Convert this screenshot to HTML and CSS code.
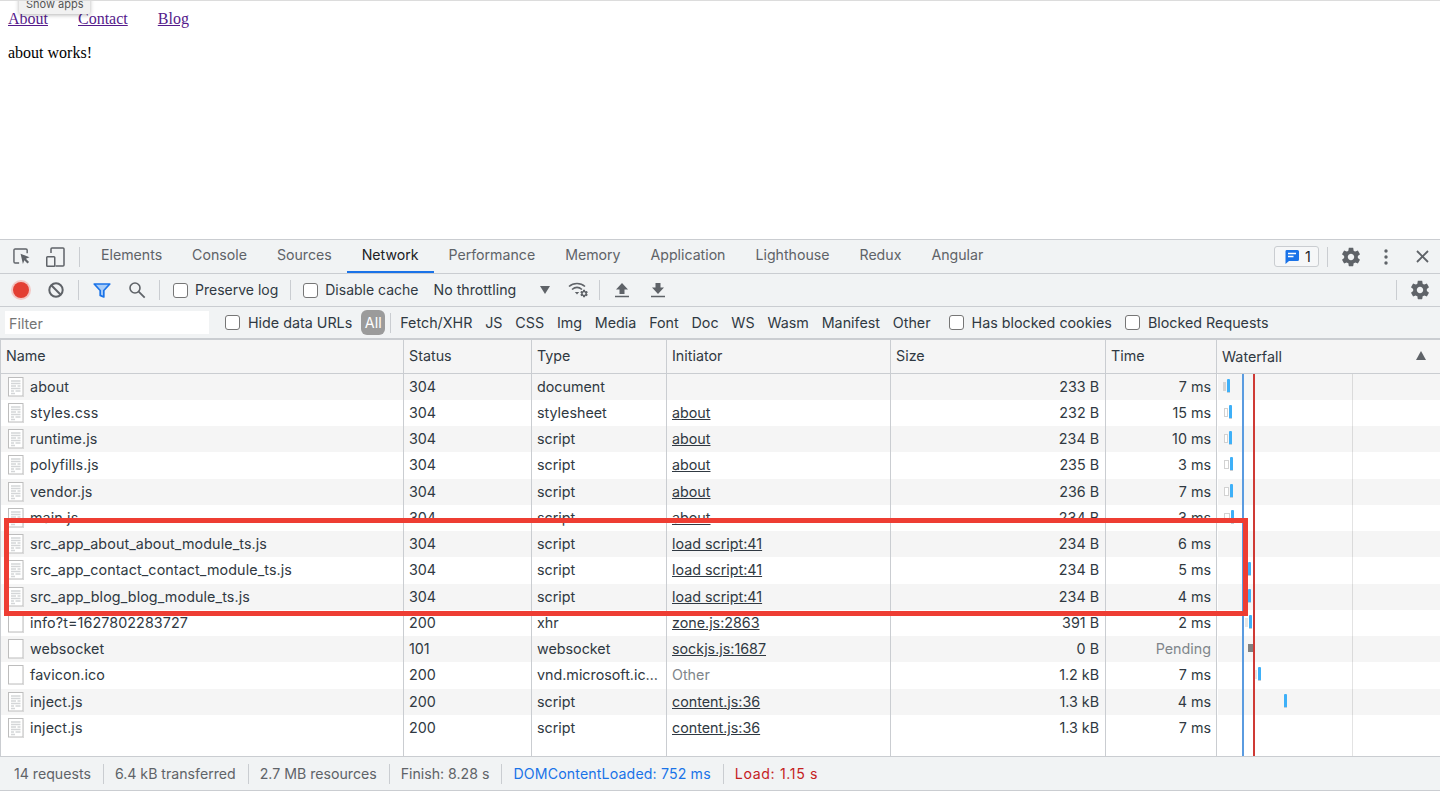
FILE: index.html
```html
<!DOCTYPE html>
<html lang="en">
<head>
<meta charset="utf-8">
<title>about works</title>
<link rel="stylesheet" href="styles.css">
</head>
<body>
<svg class="defs" width="0" height="0" aria-hidden="true">
  <symbol id="gear" viewBox="0 0 24 24"><path d="M19.43 12.98c.04-.32.07-.64.07-.98s-.03-.66-.07-.98l2.11-1.65c.19-.15.24-.42.12-.64l-2-3.46c-.12-.22-.39-.3-.61-.22l-2.49 1c-.52-.4-1.08-.73-1.69-.98l-.38-2.65C14.46 2.18 14.25 2 14 2h-4c-.25 0-.46.18-.49.42l-.38 2.65c-.61.25-1.17.59-1.69.98l-2.49-1c-.23-.09-.49 0-.61.22l-2 3.46c-.13.22-.07.49.12.64l2.11 1.65c-.04.32-.07.65-.07.98s.03.66.07.98l-2.11 1.65c-.19.15-.24.42-.12.64l2 3.46c.12.22.39.3.61.22l2.49-1c.52.4 1.08.73 1.69.98l.38 2.65c.03.24.24.42.49.42h4c.25 0 .46-.18.49-.42l.38-2.65c.61-.25 1.17-.59 1.69-.98l2.49 1c.23.09.49 0 .61-.22l2-3.46c.12-.22.07-.49-.12-.64l-2.11-1.65zM12 15.5c-1.93 0-3.5-1.57-3.5-3.5s1.57-3.5 3.5-3.5 3.5 1.57 3.5 3.5-1.57 3.5-3.5 3.5z"/></symbol>
  <symbol id="doc" viewBox="0 0 16 20"><rect x=".5" y=".5" width="14.5" height="18.5" fill="#fff" stroke="#bdbdbd"/><path d="M15.5 2v18H2" fill="none" stroke="#d8d8d8"/><path d="M3 4h9.5M3 6.5h9.5M3 9h5M9.500 9h3M3 11.500h9.500M3 14h3M7.500 14h5M3 16.500h4" stroke="#d4d6d8" stroke-width="1.300"/></symbol>
  <symbol id="blank" viewBox="0 0 16 20"><rect x=".5" y=".5" width="14.5" height="18.5" fill="#fff" stroke="#bdbdbd"/><path d="M15.500 2v18H2" fill="none" stroke="#d8d8d8"/></symbol>
</svg>

<main class="page">
  <div class="tooltip">Show apps</div>
  <nav class="nav"><a href="#about">About</a><a href="#contact">Contact</a><a href="#blog">Blog</a></nav>
  <p class="works">about works!</p>
</main>

<section class="devtools">
  <header class="bar tabbar">
    <svg class="ic-inspect" width="17" height="17" viewBox="0 0 18 18"><path d="M6.500 15.800H2.300a1.300 1.300 0 0 1-1.300-1.300V2.300A1.300 1.300 0 0 1 2.300 1h11.400A1.300 1.300 0 0 1 15 2.300v3.200" fill="none" stroke="#5f6368" stroke-width="1.500"/><path d="M8 6l9.500 3.900-3.800 1.500 3.300 3.300-1.700 1.700-3.300-3.300-1.500 3.800z" fill="#5f6368"/></svg>
    <svg class="ic-device" width="20" height="20" viewBox="0 0 20 20"><path d="M6 6V2a1 1 0 0 1 1-1h11a1 1 0 0 1 1 1v16a1 1 0 0 1-1 1h-7.500" fill="none" stroke="#5f6368" stroke-width="1.500"/><rect x="1.750" y="9.750" width="8" height="9.500" rx=".8" fill="none" stroke="#5f6368" stroke-width="1.500"/></svg>
    <span class="sep sep-tabs"></span>
    <span class="tab">Elements</span><span class="tab">Console</span><span class="tab">Sources</span><span class="tab active">Network</span><span class="tab">Performance</span><span class="tab">Memory</span><span class="tab">Application</span><span class="tab">Lighthouse</span><span class="tab">Redux</span><span class="tab">Angular</span>
    <span class="spacer"></span>
    <span class="issues"><svg width="14" height="14" viewBox="0 0 14 14"><path d="M1.500 0h11A1.500 1.500 0 0 1 14 1.500v8a1.500 1.500 0 0 1-1.500 1.500H4l-3.500 3V1.500A1.500 1.500 0 0 1 1.500 0z" fill="#1a73e8"/><path d="M3 3.500h8M3 6.500h5.500" stroke="#fff" stroke-width="1.300"/></svg>1</span>
    <span class="sep sep-issues"></span>
    <svg class="ic-gear-top" width="22" height="22"><use href="#gear"/></svg>
    <svg class="ic-kebab" width="4" height="16" viewBox="0 0 4 16"><circle cx="2" cy="2" r="1.700"/><circle cx="2" cy="8" r="1.700"/><circle cx="2" cy="14" r="1.700"/></svg>
    <svg class="ic-close" width="13" height="13" viewBox="0 0 13 13"><path d="M1 1l11 11M12 1L1 12" stroke="#5f6368" stroke-width="1.800"/></svg>
  </header>

  <div class="bar toolbar">
    <span class="record"></span>
    <svg class="ic-clear" width="16" height="16" viewBox="0 0 16 16"><circle cx="8" cy="8" r="6.700" fill="none" stroke="#5f6368" stroke-width="2"/><path d="M3.300 3.300l9.400 9.400" stroke="#5f6368" stroke-width="2"/></svg>
    <span class="sep sep-clear"></span>
    <svg class="ic-filter" width="18" height="15" viewBox="0 0 18 15"><path d="M1.200 1h15.600l-6 6.500V14l-3.600-1.600V7.500z" fill="#a9cdf8" stroke="#1a73e8" stroke-width="1.700" stroke-linejoin="round"/></svg>
    <svg class="ic-search" width="18" height="18" viewBox="0 0 18 18"><circle cx="7" cy="7" r="5" fill="none" stroke="#5f6368" stroke-width="1.600"/><path d="M10.700 10.700l6 6" stroke="#5f6368" stroke-width="1.800"/></svg>
    <span class="sep sep-search"></span>
    <label class="check"><span class="box"></span>Preserve log</label>
    <span class="sep sep-log"></span>
    <label class="check"><span class="box"></span>Disable cache</label>
    <span class="throttle">No throttling</span>
    <span class="caret"></span>
    <svg class="ic-wifi" width="21" height="16" viewBox="0 0 21 16"><path d="M1 4.500C5.500.5 12.500.5 17 4.500M4 7.500c3-2.500 7-2.500 10 0" fill="none" stroke="#5f6368" stroke-width="1.600"/><path d="M6.800 10h4.400L9 12.600z" fill="#5f6368"/><g transform="translate(11.500 7) scale(.38)"><use href="#gear" width="24" height="24" fill="#5f6368"/></g></svg>
    <span class="sep sep-wifi"></span>
    <svg class="ic-up" width="14" height="16" viewBox="0 0 14 16"><path d="M7 1l6 6.500H9.500V12h-5V7.500H1z" fill="#5f6368"/><path d="M0 14.500h14" stroke="#5f6368" stroke-width="1.500"/></svg>
    <svg class="ic-down" width="14" height="16" viewBox="0 0 14 16"><path d="M7 12L1 5.500h3.500V1h5v4.500H13z" fill="#5f6368"/><path d="M0 14.500h14" stroke="#5f6368" stroke-width="1.500"/></svg>
    <span class="spacer"></span>
    <span class="sep sep-end"></span>
    <svg class="ic-gear-end" width="22" height="22"><use href="#gear"/></svg>
  </div>

  <div class="filterbar">
    <span class="filter-input">Filter</span>
    <label class="check check-hide"><span class="box"></span>Hide data URLs</label>
    <span class="pill">All</span>
    <span class="sep sep-all"></span>
    <span class="types"><span>Fetch/XHR</span><span>JS</span><span>CSS</span><span>Img</span><span>Media</span><span>Font</span><span>Doc</span><span>WS</span><span>Wasm</span><span>Manifest</span><span>Other</span></span>
    <label class="check check-cookies"><span class="box"></span>Has blocked cookies</label>
    <label class="check check-requests"><span class="box"></span>Blocked Requests</label>
  </div>

  <div class="log">
    <div class="row head">
      <div class="cell">Name</div><div class="cell">Status</div><div class="cell">Type</div><div class="cell">Initiator</div><div class="cell">Size</div><div class="cell">Time</div>
      <div class="cell wf-head">Waterfall<span class="sort"></span></div>
    </div>
    <div class="body">
      <div class="row"><div class="cell name"><svg class="file" width="16" height="20"><use href="#doc"/></svg>about</div><div class="cell">304</div><div class="cell">document</div><div class="cell"></div><div class="cell num">233 B</div><div class="cell num">7 ms</div><div class="cell wf"><i class="wait solid" style="left:6px;width:3px"></i><i class="bar" style="left:10px"></i></div></div>
      <div class="row"><div class="cell name"><svg class="file" width="16" height="20"><use href="#doc"/></svg>styles.css</div><div class="cell">304</div><div class="cell">stylesheet</div><div class="cell"><a class="init">about</a></div><div class="cell num">232 B</div><div class="cell num">15 ms</div><div class="cell wf"><i class="wait" style="left:7px;width:4px"></i><i class="bar" style="left:12px"></i></div></div>
      <div class="row"><div class="cell name"><svg class="file" width="16" height="20"><use href="#doc"/></svg>runtime.js</div><div class="cell">304</div><div class="cell">script</div><div class="cell"><a class="init">about</a></div><div class="cell num">234 B</div><div class="cell num">10 ms</div><div class="cell wf"><i class="wait" style="left:7px;width:4px"></i><i class="bar" style="left:12px"></i></div></div>
      <div class="row"><div class="cell name"><svg class="file" width="16" height="20"><use href="#doc"/></svg>polyfills.js</div><div class="cell">304</div><div class="cell">script</div><div class="cell"><a class="init">about</a></div><div class="cell num">235 B</div><div class="cell num">3 ms</div><div class="cell wf"><i class="wait" style="left:7px;width:5px"></i><i class="bar" style="left:13px"></i></div></div>
      <div class="row"><div class="cell name"><svg class="file" width="16" height="20"><use href="#doc"/></svg>vendor.js</div><div class="cell">304</div><div class="cell">script</div><div class="cell"><a class="init">about</a></div><div class="cell num">236 B</div><div class="cell num">7 ms</div><div class="cell wf"><i class="wait" style="left:7px;width:5px"></i><i class="bar" style="left:13px"></i></div></div>
      <div class="row"><div class="cell name"><svg class="file" width="16" height="20"><use href="#doc"/></svg>main.js</div><div class="cell">304</div><div class="cell">script</div><div class="cell"><a class="init">about</a></div><div class="cell num">234 B</div><div class="cell num">3 ms</div><div class="cell wf"><i class="wait" style="left:7px;width:6px"></i><i class="bar" style="left:14px"></i></div></div>
      <div class="row"><div class="cell name"><svg class="file" width="16" height="20"><use href="#doc"/></svg>src_app_about_about_module_ts.js</div><div class="cell">304</div><div class="cell">script</div><div class="cell"><a class="init">load script:41</a></div><div class="cell num">234 B</div><div class="cell num">6 ms</div><div class="cell wf"><i class="bar" style="left:25px"></i></div></div>
      <div class="row"><div class="cell name"><svg class="file" width="16" height="20"><use href="#doc"/></svg>src_app_contact_contact_module_ts.js</div><div class="cell">304</div><div class="cell">script</div><div class="cell"><a class="init">load script:41</a></div><div class="cell num">234 B</div><div class="cell num">5 ms</div><div class="cell wf"><i class="bar" style="left:31px"></i></div></div>
      <div class="row"><div class="cell name"><svg class="file" width="16" height="20"><use href="#doc"/></svg>src_app_blog_blog_module_ts.js</div><div class="cell">304</div><div class="cell">script</div><div class="cell"><a class="init">load script:41</a></div><div class="cell num">234 B</div><div class="cell num">4 ms</div><div class="cell wf"><i class="bar" style="left:31px"></i></div></div>
      <div class="row"><div class="cell name"><svg class="file" width="16" height="20"><use href="#blank"/></svg>info?t=1627802283727</div><div class="cell">200</div><div class="cell">xhr</div><div class="cell"><a class="init">zone.js:2863</a></div><div class="cell num">391 B</div><div class="cell num">2 ms</div><div class="cell wf"><i class="wait solid pale" style="left:28px;width:3px"></i><i class="bar" style="left:32px"></i></div></div>
      <div class="row"><div class="cell name"><svg class="file" width="16" height="20"><use href="#blank"/></svg>websocket</div><div class="cell">101</div><div class="cell">websocket</div><div class="cell"><a class="init">sockjs.js:1687</a></div><div class="cell num">0 B</div><div class="cell num muted">Pending</div><div class="cell wf"><i class="socket" style="left:31px"></i></div></div>
      <div class="row"><div class="cell name"><svg class="file" width="16" height="20"><use href="#blank"/></svg>favicon.ico</div><div class="cell">200</div><div class="cell">vnd.microsoft.ic…</div><div class="cell muted">Other</div><div class="cell num">1.2 kB</div><div class="cell num">7 ms</div><div class="cell wf"><i class="wait solid pale" style="left:37px;width:3px"></i><i class="bar" style="left:41px"></i></div></div>
      <div class="row"><div class="cell name"><svg class="file" width="16" height="20"><use href="#doc"/></svg>inject.js</div><div class="cell">200</div><div class="cell">script</div><div class="cell"><a class="init">content.js:36</a></div><div class="cell num">1.3 kB</div><div class="cell num">4 ms</div><div class="cell wf"><i class="bar" style="left:67px"></i></div></div>
      <div class="row"><div class="cell name"><svg class="file" width="16" height="20"><use href="#doc"/></svg>inject.js</div><div class="cell">200</div><div class="cell">script</div><div class="cell"><a class="init">content.js:36</a></div><div class="cell num">1.3 kB</div><div class="cell num">7 ms</div><div class="cell wf"></div></div>
      <div class="row filler"><div class="cell"></div><div class="cell"></div><div class="cell"></div><div class="cell"></div><div class="cell"></div><div class="cell"></div><div class="cell wf"></div></div>
      <span class="mark grid-line"></span><span class="mark dcl-line"></span><span class="mark load-line"></span>
      <div class="highlight"></div>
    </div>
  </div>

  <footer class="status">
    <span>14 requests</span><span>6.4 kB transferred</span><span>2.7 MB resources</span><span>Finish: 8.28 s</span><span class="dcl">DOMContentLoaded: 752 ms</span><span class="load">Load: 1.15 s</span>
  </footer>
</section>
</body>
</html>
```
FILE: styles.css
```css
* { box-sizing: border-box; }
html, body { height: 100%; margin: 0; }
body { display: flex; flex-direction: column; overflow: hidden; background: #fff; }
.defs { position: absolute; }

/* page under inspection */
.page { position: relative; flex: 0 0 239px; padding: 9px 8px 0; border-top: 1px solid #dcdcdc; font: 16px/18px "Liberation Serif", serif; color: #000; overflow: hidden; }
.nav { display: flex; gap: 30px; }
.nav a { color: #551a8b; text-decoration: underline; }
.works { margin: 16px 0 0; }
.tooltip { position: absolute; left: 19px; top: -9px; width: 71px; height: 22px; padding: 6px 0 0 7px; background: #f1f1f1; border-radius: 2px; box-shadow: 0 1px 4px rgba(0,0,0,.3); font: 11px/12px "Inter", "Liberation Sans", sans-serif; color: #555; }

/* devtools shell */
.devtools { flex: 1; display: flex; flex-direction: column; min-height: 0; background: #f1f3f4; border-top: 1px solid #cacdd1; font: 14.3px/18px "Inter", "Liberation Sans", sans-serif; color: #303942; }
.bar { display: flex; align-items: center; flex: none; border-bottom: 1px solid #cacdd1; }
.tabbar { height: 34px; padding-left: 13px; font-size: 14.15px; }
.toolbar { height: 33px; padding-left: 13px; font-size: 14px; }
.spacer { flex: 1; }
.sep { flex: none; width: 1px; height: 20px; background: #cacdd1; }
svg { flex: none; display: block; }

.ic-device { margin-left: 15px; }
.sep-tabs { margin-left: 14px; margin-right: 6px; }
.tab { height: 33px; padding: 6px 15px 0; color: #5f6368; border-bottom: 2px solid transparent; white-space: nowrap; }
.tab.active { color: #202124; border-bottom-color: #1a73e8; }
.issues { display: flex; align-items: center; gap: 6px; width: 45px; height: 21px; padding-left: 10px; background: #f6f7f8; border: 1px solid #cacdd1; border-radius: 3px; color: #202124; }
.sep-issues { margin-left: 8px; }
.ic-gear-top { margin-left: 12px; fill: #5f6368; }
.ic-kebab { margin-left: 22px; fill: #5f6368; }
.ic-close { margin-left: 28px; margin-right: 11px; }

.record { width: 16px; height: 16px; border-radius: 50%; background: #e33e32; box-shadow: 0 0 0 2px #f3c6c3; }
.ic-clear { margin-left: 19px; }
.sep-clear { margin-left: 14px; }
.ic-filter { margin-left: 14px; }
.ic-search { margin-left: 17px; }
.sep-search { margin-left: 13px; }
.check { display: flex; align-items: center; gap: 7px; white-space: nowrap; }
.box { width: 15px; height: 15px; background: #fff; border: 1px solid #767676; border-radius: 3px; flex: none; }
.toolbar .check { margin-left: 13px; }
.sep-log { margin-left: 12px; margin-right: -1px; }
.throttle { margin-left: 15px; white-space: nowrap; font-size: 14.2px; }
.caret { margin-left: 24px; width: 0; height: 0; border: 5px solid transparent; border-top: 8px solid #5f6368; border-bottom: 0; }
.ic-wifi { margin-left: 18px; }
.sep-wifi { margin-left: 10px; }
.ic-up { margin-left: 15px; }
.ic-down { margin-left: 22px; }
.sep-end { margin-right: 12px; }
.ic-gear-end { margin-right: 9px; fill: #5f6368; }

.filterbar { display: flex; align-items: center; flex: none; height: 33px; padding-left: 5px; border-bottom: 2px solid #cacdd1; }
.filterbar .check { gap: 8px; }
.filter-input { width: 204px; height: 23px; padding: 4px 0 0 4px; background: #fff; color: #757575; }
.check-hide { margin-left: 16px; }
.pill { margin-left: 9px; width: 24px; height: 25px; padding-top: 4px; text-align: center; background: #9b9b9b; color: #fff; border-radius: 6px; }
.sep-all { margin-left: 5px; }
.types { display: flex; gap: 12.8px; margin-left: 9px; white-space: nowrap; }
.check-cookies { margin-left: 18px; }
.check-requests { margin-left: 13px; }

/* network log */
.log { flex: 1; min-height: 0; display: flex; flex-direction: column; border-left: 1px solid #cacdd1; }
.row { display: grid; grid-template-columns: 403px 128px 135px 224px 215px 111px 1fr; height: 26.25px; background: #fff; }
.row:nth-child(odd) { background: #f5f5f5; }
.cell { display: flex; align-items: center; min-width: 0; padding: 0 5px; border-right: 1px solid #cacdd1; white-space: nowrap; overflow: hidden; }
.body .cell { padding-bottom: .3px; }
.head { flex: none; height: 33.7px; background: #f1f3f4; border-bottom: 1px solid #cacdd1; }
.head .cell { padding-bottom: 1px; }
.wf-head { position: relative; border-right: 0; padding-top: 3px; }
.sort { position: absolute; right: 14px; top: 11px; width: 0; height: 0; border: 5px solid transparent; border-bottom: 9px solid #5f6368; border-top: 0; }
.body { position: relative; flex: 1; min-height: 0; display: flex; flex-direction: column; }
.row.filler { flex: 1; height: auto; background: #fff; }
.name { padding-left: 7px; gap: 6px; letter-spacing: .1px; }
.num { justify-content: flex-end; }
.row .cell:nth-child(5) { padding-right: 6px; }
.muted { color: #80868b; }
.init { color: #303942; text-decoration: underline; }
.wf { position: relative; border-right: 0; box-shadow: inset 1px 0 #fff; }
.wf i { position: absolute; top: 5px; height: 14px; }
.wf .bar { width: 3px; background: #3eb0f8; border-radius: 1px; }
.wf .wait { top: 8px; height: 9px; background: #fff; border: 1px solid #d2d2d2; }
.wf .wait.solid { background: #d4d4d4; border: 0; }
.wf .wait.pale { background: #e6e6e6; }
.wf .socket { top: 8px; width: 6px; height: 8px; background: #808080; }

.mark { position: absolute; top: 0; bottom: 0; }
.grid-line { left: 1351px; width: 1px; background: rgba(0,0,0,.11); }
.dcl-line { left: 1241px; width: 2px; background: #5a9be0; }
.load-line { left: 1252px; width: 2px; background: #cf3a35; }
.highlight { position: absolute; left: 3px; top: 144.3px; width: 1244px; height: 98px; border: 5px solid #ee3d33; }

.status { flex: none; display: flex; align-items: center; height: 35px; padding: 0 0 0 14px; border-top: 1px solid #cacdd1; border-bottom: 1px solid #cacdd1; color: #5f6368; white-space: nowrap; font-size: 14.15px; }
.status span { padding-right: 12px; margin-right: 11px; border-right: 1px solid #cacdd1; line-height: 20px; }
.status span:last-child { border-right: 0; }
.status .dcl { color: #1a73e8; letter-spacing: .15px; }
.status .load { color: #c5221f; letter-spacing: .65px; }
```
